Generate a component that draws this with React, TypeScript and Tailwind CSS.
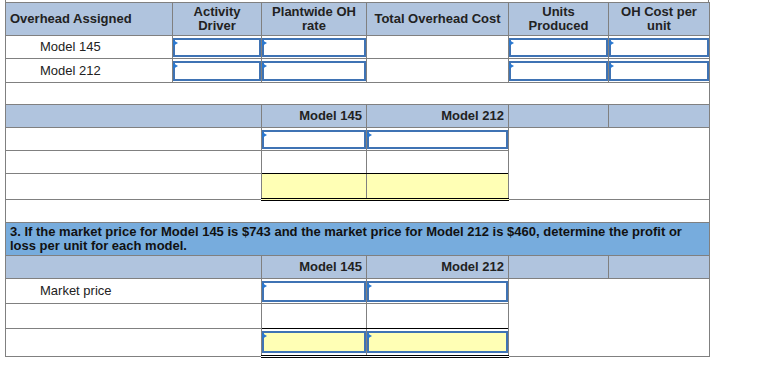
import React from "react";

const line = "border border-[#808080] p-0";
const head = "bg-[#b0c4de] font-bold text-[#222] leading-[14px]";

function Inp({ h, yellow = false }: { h: number; yellow?: boolean }) {
  return (
    <div
      className={`relative border-2 border-[#3f73b4] ${yellow ? "bg-[#ffffb5]" : "bg-white"}`}
      style={{ height: h }}
    >
      <span className="absolute -left-[2px] top-0 h-0 w-0 border-y-[3px] border-l-[5px] border-y-transparent border-l-[#2a78d0]" />
    </div>
  );
}

export default function App() {
  return (
    <div className="min-h-[380px] bg-white pl-[5px] font-['Liberation_Sans',Arial,sans-serif] text-[13px] text-[#222]">
      <div className="h-[2px] w-[704px] border-x border-[#808080]" />
      <table className="w-[704px] table-fixed border-collapse">
        <colgroup>
          <col className="w-[167px]" />
          <col className="w-[89px]" />
          <col className="w-[105px]" />
          <col className="w-[142px]" />
          <col className="w-[100px]" />
          <col className="w-[101px]" />
        </colgroup>
        <tbody>
          {/* section 1 */}
          <tr className="h-[33px]">
            <td className={`${line} ${head} px-[4px] text-left`}>Overhead Assigned</td>
            <td className={`${line} ${head} text-center`}>Activity<br />Driver</td>
            <td className={`${line} ${head} text-center`}>Plantwide OH<br />rate</td>
            <td className={`${line} ${head} text-center`}>Total Overhead Cost</td>
            <td className={`${line} ${head} text-center`}>Units<br />Produced</td>
            <td className={`${line} ${head} text-center`}>OH Cost per<br />unit</td>
          </tr>
          {[
            ["Model 145", 19],
            ["Model 212", 20],
          ].map(([label, h]) => (
            <tr key={label} className={h === 19 ? "h-[23px]" : "h-[24px]"}>
              <td className={`${line} pl-[34px]`}>{label}</td>
              <td className={line}><Inp h={h as number} /></td>
              <td className={line}><Inp h={h as number} /></td>
              <td className={line} />
              <td className={line}><Inp h={h as number} /></td>
              <td className={line}><Inp h={h as number} /></td>
            </tr>
          ))}
          <tr className="h-[22px]">
            <td colSpan={6} className={line} />
          </tr>

          {/* section 2 */}
          <tr className="h-[23px]">
            <td colSpan={2} className={`${line} ${head}`} />
            <td className={`${line} ${head} pr-[4px] text-right`}>Model 145</td>
            <td className={`${line} ${head} pr-[4px] text-right`}>Model 212</td>
            <td className={`${line} ${head}`} />
            <td className={`${line} ${head}`} />
          </tr>
          <tr className="h-[23px]">
            <td colSpan={2} className={line} />
            <td className={line}><Inp h={19} /></td>
            <td className={line}><Inp h={19} /></td>
            <td colSpan={2} rowSpan={3} className={line} />
          </tr>
          <tr className="h-[23px]">
            <td colSpan={2} className={line} />
            <td className={`${line} border-b-black`} />
            <td className={`${line} border-b-black`} />
          </tr>
          <tr className="h-[26px]">
            <td colSpan={2} className={line} />
            <td className={`${line} bg-[#ffffb5] [border-bottom:3px_double_#000]`} />
            <td className={`${line} bg-[#ffffb5] [border-bottom:3px_double_#000]`} />
          </tr>
          <tr className="h-[23px]">
            <td colSpan={6} className={line} />
          </tr>

          {/* section 3 */}
          <tr className="h-[33px]">
            <td
              colSpan={6}
              className={`${line} bg-[#77acdd] px-[4px] align-middle font-bold leading-[14px] text-[#111]`}
            >
              3. If the market price for Model 145 is $743 and the market price for Model 212 is $460, determine the profit or loss per unit for each model.
            </td>
          </tr>
          <tr className="h-[23px]">
            <td colSpan={2} className={`${line} ${head}`} />
            <td className={`${line} ${head} pr-[4px] text-right`}>Model 145</td>
            <td className={`${line} ${head} pr-[4px] text-right`}>Model 212</td>
            <td className={`${line} ${head}`} />
            <td className={`${line} ${head}`} />
          </tr>
          <tr className="h-[25px]">
            <td colSpan={2} className={`${line} pl-[34px]`}>Market price</td>
            <td className={line}><Inp h={21} /></td>
            <td className={line}><Inp h={21} /></td>
            <td colSpan={2} rowSpan={3} className={line} />
          </tr>
          <tr className="h-[25px]">
            <td colSpan={2} className={line} />
            <td className={`${line} border-b-black`} />
            <td className={`${line} border-b-black`} />
          </tr>
          <tr className="h-[28px]">
            <td colSpan={2} className={line} />
            <td className={`${line} [border-bottom:3px_double_#000]`}><Inp h={22} yellow /></td>
            <td className={`${line} [border-bottom:3px_double_#000]`}><Inp h={22} yellow /></td>
          </tr>
        </tbody>
      </table>
    </div>
  );
}
